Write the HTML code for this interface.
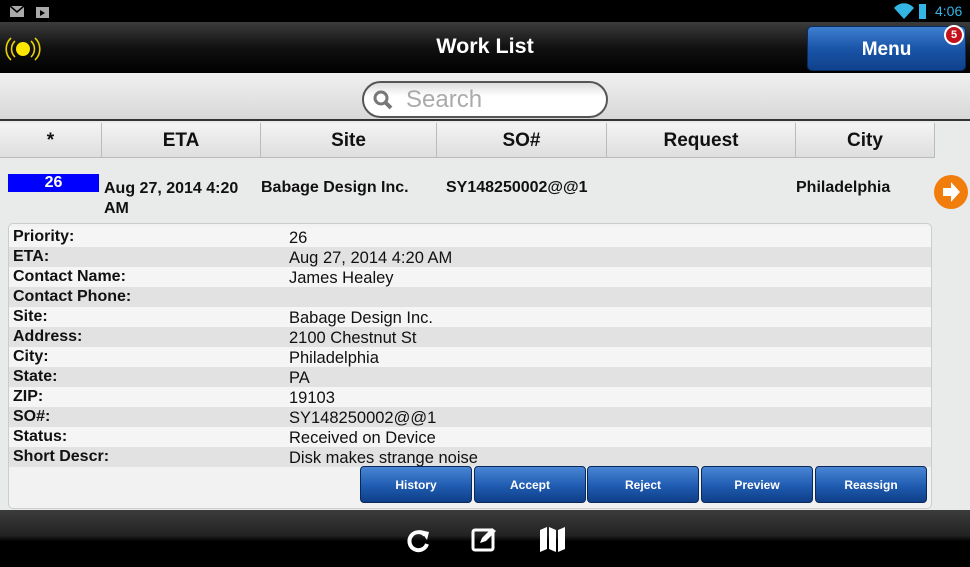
<!DOCTYPE html>
<html><head><meta charset="utf-8"><style>
*{margin:0;padding:0;box-sizing:border-box}
body{width:970px;height:567px;overflow:hidden;background:#e9ebea;font-family:"Liberation Sans",sans-serif;position:relative}
.abs{position:absolute}
#status{left:0;top:0;width:970px;height:22px;background:#000}
#hdr{left:0;top:22px;width:970px;height:51px;background:linear-gradient(#3c3c3c,#111 50%,#000)}
#hdr h1{position:absolute;left:0;width:970px;top:12px;text-align:center;color:#fff;font-size:21.5px;font-weight:bold}
#menu{left:807px;top:26px;width:159px;height:45px;border-radius:5px;background:linear-gradient(#3f7fd0,#1a55a8 50%,#0f418c);color:#fff;font-weight:bold;font-size:19px;text-align:center;line-height:45px;border:1px solid #0a2c60}
#badge{left:944px;top:25px;width:20px;height:20px;border-radius:50%;background:#c2121c;border:2px solid #fff;color:#fff;font-size:11px;font-weight:bold;text-align:center;line-height:16px}
#sbar{left:0;top:73px;width:970px;height:48px;background:linear-gradient(#f0f0f0,#d8d8d8);border-bottom:2px solid #333}
#search{left:362px;top:81px;width:246px;height:37px;border:2px solid #555;border-radius:19px;background:linear-gradient(#ddd,#fff 40%);color:#aaa;font-size:24px;line-height:33px;padding-left:42px}
#thead{left:0;top:123px;width:935px;height:35px;display:flex;background:linear-gradient(#f4f4f4,#dedede);border-bottom:1px solid #bbb}
#thead div{border-right:1px solid #bbb;text-align:center;font-weight:bold;font-size:19px;line-height:35px;color:#111}
.r{font-weight:bold;font-size:16px;color:#111}
#det{left:8px;top:223px;width:924px;height:286px;border:1px solid #ccc;border-radius:5px;background:#f2f2f2}
.row{position:absolute;left:9px;width:922px;height:20px;font-size:16px;color:#111}
.row b{position:absolute;left:4px;top:1px}
.row span{position:absolute;left:280px;top:2px;font-size:16.5px}
.btn{position:absolute;top:466px;width:112px;height:37px;border-radius:4px;background:linear-gradient(#4a86d4,#1f5bb0 55%,#0f3f88);border:1px solid #0a2858;color:#fff;font-weight:bold;font-size:12px;text-align:center;line-height:36px}
#foot{left:0;top:510px;width:970px;height:57px;background:linear-gradient(#3c3c3c,#222 45%,#000 55%)}
</style></head><body>
<div class="abs" id="status">
<svg class="abs" style="left:10px;top:5px" width="40" height="13"><rect x="0" y="1" width="14" height="11" fill="#aaa"/><path d="M0 1 L7 7 L14 1" stroke="#000" fill="none" stroke-width="1.5"/><rect x="26" y="2" width="13" height="11" fill="#aaa"/><path d="M30 5 L35 8 L30 11Z" fill="#000"/></svg>
<svg class="abs" style="left:893px;top:2px" width="40" height="18"><path d="M1 6 A13 13 0 0 1 21 6 L11 17Z" fill="#33b5e5"/><rect x="26" y="2" width="7" height="15" fill="#33b5e5"/></svg>
<div class="abs" style="left:935px;top:3px;color:#33b5e5;font-size:14px">4:06</div>
</div>
<div class="abs" id="hdr"><h1>Work List</h1>
<svg class="abs" style="left:4px;top:13px" width="38" height="28"><circle cx="19" cy="14" r="7" fill="#ffe600"/><path d="M11 6 A11 11 0 0 0 11 22 M27 6 A11 11 0 0 1 27 22 M7 3 A15 15 0 0 0 7 25 M31 3 A15 15 0 0 1 31 25" stroke="#e8d000" stroke-width="1.6" fill="none"/></svg>
</div>
<div class="abs" id="menu">Menu</div>
<div class="abs" id="badge">5</div>
<div class="abs" id="sbar"></div>
<div class="abs" id="search">Search</div>
<svg class="abs" style="left:371px;top:88px" width="24" height="24"><circle cx="10" cy="10" r="6" stroke="#777" stroke-width="3" fill="none"/><path d="M14 14 L20 20" stroke="#777" stroke-width="4"/></svg>
<div class="abs" id="thead"><div style="width:102px">*</div><div style="width:159px">ETA</div><div style="width:176px">Site</div><div style="width:170px">SO#</div><div style="width:189px">Request</div><div style="width:139px">City</div></div>
<div class="abs" style="left:8px;top:174px;width:91px;height:18px;background:#0000ff;color:#fff;font-weight:bold;font-size:16px;text-align:center;line-height:18px">26</div>
<div class="abs r" style="left:104px;top:179px;line-height:20px">Aug 27, 2014 4:20<br>AM</div>
<div class="abs r" style="left:261px;top:179px">Babage Design Inc.</div>
<div class="abs r" style="left:446px;top:179px">SY148250002@@1</div>
<div class="abs r" style="left:796px;top:179px">Philadelphia</div>
<svg class="abs" style="left:933px;top:174px" width="36" height="36"><circle cx="18" cy="18" r="17" fill="#f07d0c"/><path d="M10 14 H18 V8 L27 18 L18 28 V22 H10Z" fill="#fff"/></svg>
<div class="abs" id="det"></div>
<div class="row" style="top:227px;background:#f5f5f5"><b>Priority:</b><span>26</span></div>
<div class="row" style="top:247px;background:#e2e2e2"><b>ETA:</b><span>Aug 27, 2014 4:20 AM</span></div>
<div class="row" style="top:267px;background:#f5f5f5"><b>Contact Name:</b><span>James Healey</span></div>
<div class="row" style="top:287px;background:#e2e2e2"><b>Contact Phone:</b><span></span></div>
<div class="row" style="top:307px;background:#f5f5f5"><b>Site:</b><span>Babage Design Inc.</span></div>
<div class="row" style="top:327px;background:#e2e2e2"><b>Address:</b><span>2100 Chestnut St</span></div>
<div class="row" style="top:347px;background:#f5f5f5"><b>City:</b><span>Philadelphia</span></div>
<div class="row" style="top:367px;background:#e2e2e2"><b>State:</b><span>PA</span></div>
<div class="row" style="top:387px;background:#f5f5f5"><b>ZIP:</b><span>19103</span></div>
<div class="row" style="top:407px;background:#e2e2e2"><b>SO#:</b><span>SY148250002@@1</span></div>
<div class="row" style="top:427px;background:#f5f5f5"><b>Status:</b><span>Received on Device</span></div>
<div class="row" style="top:447px;background:#e2e2e2"><b>Short Descr:</b><span>Disk makes strange noise</span></div>
<div class="btn" style="left:360px">History</div>
<div class="btn" style="left:474px">Accept</div>
<div class="btn" style="left:587px">Reject</div>
<div class="btn" style="left:701px">Preview</div>
<div class="btn" style="left:815px">Reassign</div>
<div class="abs" id="foot">
<svg class="abs" style="left:405px;top:17px" width="28" height="28"><path d="M20 8 A9 9 0 1 0 22 17" stroke="#fff" stroke-width="4" fill="none"/><path d="M15 3 L24 5 L22 13Z" fill="#fff"/></svg>
<svg class="abs" style="left:470px;top:15px" width="30" height="28"><rect x="3" y="5" width="20" height="20" rx="2" stroke="#fff" stroke-width="3" fill="none"/><path d="M10 18 L12 13 L22 3 L26 6 L16 16Z" fill="#fff"/></svg>
<svg class="abs" style="left:538px;top:15px" width="30" height="30"><path d="M2 5 L9 2 V24 L2 27Z M11 2 L18 5 V27 L11 24Z M20 5 L27 2 V24 L20 27Z" fill="#fff"/></svg>
</div>
</body></html>
